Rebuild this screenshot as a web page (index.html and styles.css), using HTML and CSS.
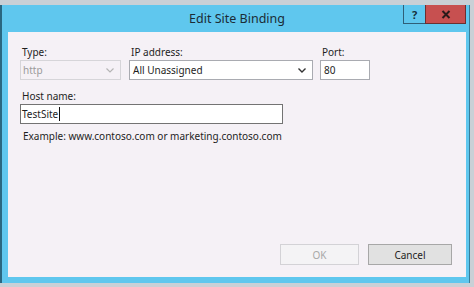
FILE: index.html
```html
<!DOCTYPE html>
<html>
  <head>
    <title>Edit Site Binding</title>
    <meta name="viewport" content="width=device-width, initial-scale=1.0">
    <link rel="stylesheet" href="styles.css">
  </head>
  <body>
    <div class="window">
      <div class="titlebar">
        <div class="title">Edit Site Binding</div>
        <div class="caption-btn help">?</div>
        <div class="caption-btn close">
          <svg width="10" height="9" viewBox="0 0 10 9">
            <path d="M1.5 1 L8.5 8 M8.5 1 L1.5 8" stroke="#2b1a1a" stroke-width="2"/>
          </svg>
        </div>
      </div>

      <div class="content">
        <div class="row">
          <div class="field type-field">
            <div class="label">Type:</div>
            <div class="select disabled">
              <span>http</span>
              <svg width="8" height="5" viewBox="0 0 8 5"><path d="M0.5 0.5 L4 4 L7.5 0.5" fill="none" stroke="#b5b5b5" stroke-width="1.2"/></svg>
            </div>
          </div>
          <div class="field ip-field">
            <div class="label">IP address:</div>
            <div class="select">
              <span>All Unassigned</span>
              <svg width="8" height="5" viewBox="0 0 8 5"><path d="M0.5 0.5 L4 4 L7.5 0.5" fill="none" stroke="#333" stroke-width="1.4"/></svg>
            </div>
          </div>
          <div class="field port-field">
            <div class="label">Port:</div>
            <div class="textbox">80</div>
          </div>
        </div>

        <div class="field host-field">
          <div class="label">Host name:</div>
          <div class="textbox focused"><span class="caret">TestSite</span></div>
        </div>
        <div class="hint">Example: www.contoso.com or marketing.contoso.com</div>

        <div class="footer">
          <div class="btn ok">OK</div>
          <div class="btn cancel">Cancel</div>
        </div>
      </div>
    </div>
  </body>
</html>
```

FILE: styles.css
```css
body{
  margin: 0;
  background-color: #c9d0d6;
  font-family: "Noto Sans", "Open Sans", Arial, sans-serif;
  font-size: 10px;
  color: #1e1e1e;
}

.window{
  margin-top: 5px;
  width: 470px;
  height: 278px;
  box-sizing: border-box;
  background-color: #5fc7ee;
  border-left: 2px solid #2a6780;
  border-right: 1px solid #3a7d98;
  padding: 0 3px 6px 6px;
  display: flex;
  flex-direction: column;
}

.titlebar{
  height: 27px;
  display: flex;
  align-items: flex-start;
}
.title{
  flex: 1;
  padding-left: 63px;
  text-align: center;
  font-size: 12.5px;
  line-height: 27px;
  color: #1b2c36;
}
.caption-btn{
  height: 19px;
  box-sizing: border-box;
  border: 1px solid #2f5f78;
  border-top: none;
  display: flex;
  align-items: center;
  justify-content: center;
}
.help{
  width: 22px;
  border-right: none;
  font-weight: bold;
  font-size: 11px;
  color: #17303d;
}
.close{
  width: 41px;
  background-color: #c75050;
  border-color: #6b3030;
}

.content{
  flex: 1;
  background-color: #f5f1f6;
  padding: 13px 14px 12px 12px;
  display: flex;
  flex-direction: column;
}

.row{
  display: flex;
  gap: 8px;
  margin-bottom: 9px;
}
.label{
  line-height: 15px;
  padding-left: 2px;
}
.type-field{ width: 101px; }
.ip-field{ width: 184px; }
.port-field{ width: 50px; margin-left: -1px; }
.host-field{ width: 263px; }

.select, .textbox{
  height: 20px;
  box-sizing: border-box;
  border: 1px solid #a9abb1;
  background-color: white;
  display: flex;
  align-items: center;
  padding: 0 3px;
}
.select span{ flex: 1; }
.select svg{ margin-right: 3px; }
.select.disabled{
  background-color: #f5f1f6;
  border-color: #d6d5d9;
  color: #9b9b9b;
  padding-left: 2px;
}
.textbox.focused{
  border-color: #737373;
  padding-left: 1px;
}
.caret{
  border-right: 1px solid #111;
  padding-right: 1px;
}

.hint{
  margin-top: 5px;
  line-height: 15px;
  padding-left: 3px;
}

.footer{
  margin-top: auto;
  display: flex;
  justify-content: flex-end;
  gap: 9px;
}
.btn{
  height: 21px;
  box-sizing: border-box;
  display: flex;
  align-items: center;
  justify-content: center;
}
.ok{
  width: 79px;
  border: 1px solid #d3d2d6;
  background-color: #f4f3f5;
  color: #a8a8a8;
}
.cancel{
  width: 84px;
  border: 1px solid #a7a7a7;
  background-color: #e1e1e1;
}
```
